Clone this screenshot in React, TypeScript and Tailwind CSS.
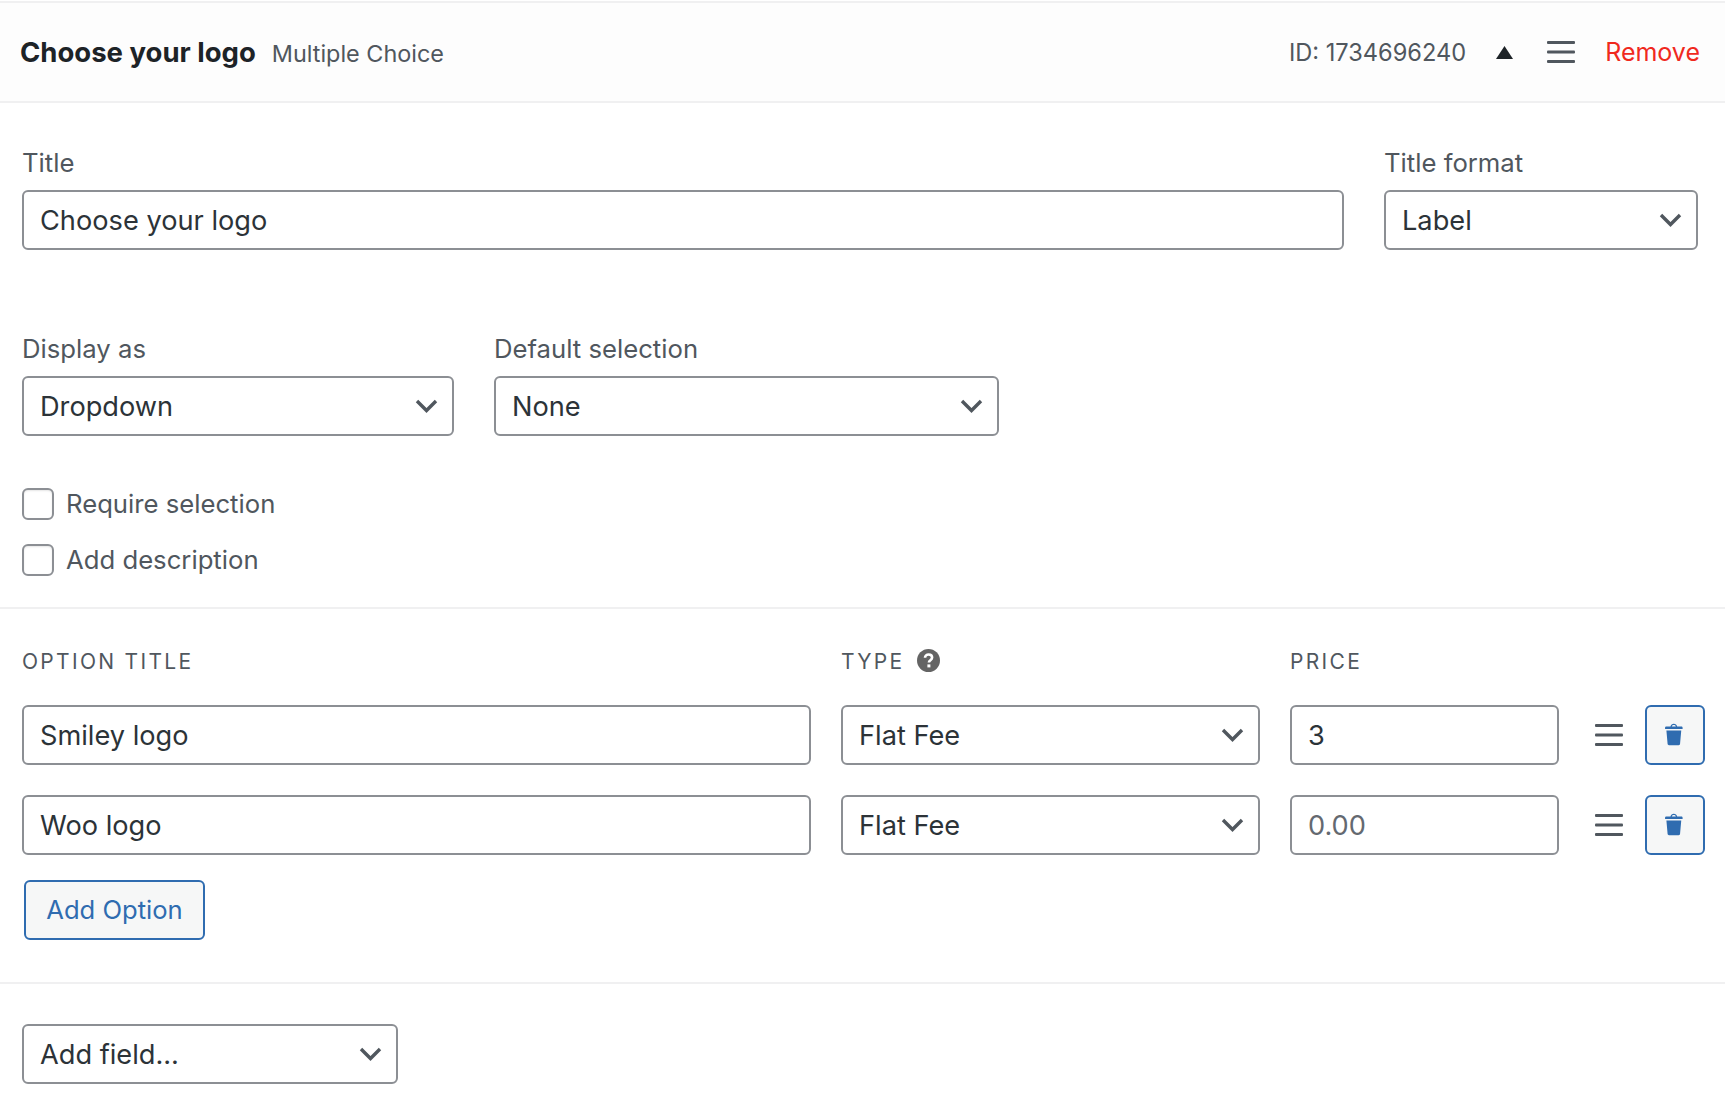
import React from 'react';

const inputClass =
  'w-full h-[60px] rounded-[6px] border-2 border-[#8c8f94] bg-white pl-[16px] pr-[16px] text-[27.2px] text-[#2c3338] placeholder:text-[#646970] outline-none';

const Chevron = () => (
  <svg
    className="absolute right-[16px] top-1/2 -translate-y-1/2 pointer-events-none"
    width="23"
    height="14"
    viewBox="0 0 23 14"
    fill="none"
    stroke="#50575e"
    strokeWidth="3.4"
  >
    <path d="M2 2l9.5 9.5L21 2" />
  </svg>
);

const Select: React.FC<{ value: string; className: string }> = ({ value, className }) => (
  <div className={`relative ${className}`}>
    <select
      defaultValue={value}
      className="w-full h-[60px] appearance-none rounded-[6px] border-2 border-[#8c8f94] bg-white pl-[16px] pr-[40px] pt-[2px] text-[27.2px] text-[#2c3338] outline-none"
    >
      <option>{value}</option>
    </select>
    <Chevron />
  </div>
);

const MenuIcon: React.FC<{ width: number; height: number }> = ({ width, height }) => (
  <svg width={width} height={height} viewBox={`0 0 ${width} ${height}`} fill="#50575e">
    <rect x="0" y="0" width={width} height="3" rx="1" />
    <rect x="0" y={(height - 3) / 2} width={width} height="3" rx="1" />
    <rect x="0" y={height - 3} width={width} height="3" rx="1" />
  </svg>
);

const TrashIcon = () => (
  <svg width="27" height="27" viewBox="0 0 20 20" fill="#2f6cb0">
    <path d="M12 4h3c.6 0 1 .4 1 1v1H3V5c0-.6.5-1 1-1h3c.2-1.1 1.3-2 2.5-2s2.3.9 2.5 2zM8 4h3c-.2-.6-.9-1-1.5-1S8.2 3.4 8 4zM4 7h11l-.9 10.1c0 .5-.5.9-1 .9H5.9c-.5 0-.9-.4-1-.9L4 7z" />
  </svg>
);

const HelpIcon = () => (
  <svg className="mb-[4px]" width="23" height="23" viewBox="0 0 23 23">
    <circle cx="11.5" cy="11.5" r="11.5" fill="#646464" />
    <path d="M8 8.8c0-2 1.6-3.3 3.6-3.3s3.5 1.2 3.5 3c0 2.7-3.2 2.6-3.2 5" fill="none" stroke="#fff" strokeWidth="2.6" />
    <rect x="10.4" y="15.4" width="3" height="3" fill="#fff" />
  </svg>
);

const Checkbox: React.FC<{ label: string }> = ({ label }) => (
  <label className="flex items-center gap-[12px] h-[32px] text-[25.7px] text-[#50575e]">
    <input
      type="checkbox"
      className="appearance-none w-[32px] h-[32px] rounded-[6px] border-2 border-[#8c8f94] bg-white shadow-[inset_0_1px_2px_rgba(0,0,0,0.1)]"
    />
    <span className="pt-px">{label}</span>
  </label>
);

const OptionRow: React.FC<{ title: string; price?: string }> = ({ title, price }) => (
  <div className="flex items-center">
    <div className="w-[789px]">
      <input className={inputClass} defaultValue={title} />
    </div>
    <Select value="Flat Fee" className="ml-[30px] w-[419px]" />
    <div className="ml-[30px] w-[269px]">
      <input className={inputClass} defaultValue={price} placeholder="0.00" />
    </div>
    <div className="ml-[36px]">
      <MenuIcon width={28} height={22} />
    </div>
    <button className="ml-[22px] flex h-[60px] w-[60px] items-center justify-center rounded-[6px] border-2 border-[#2f6cb0] bg-[#f6f7f7] pb-[2px] pr-[2px]">
      <TrashIcon />
    </button>
  </div>
);

export default function App() {
  return (
    <div className="min-h-[1116px] bg-white pt-px text-[#50575e] [font-family:Inter,sans-serif]">
      {/* Header */}
      <div className="flex h-[102px] items-center justify-between border-y-2 border-[#f0f0f1] bg-[#fdfdfd] pl-[20px] pr-[25px] pt-px">
        <div className="flex items-baseline">
          <span className="text-[27.5px] font-bold text-[#1d2327]">Choose your logo</span>
          <span className="ml-[16px] text-[23.4px] text-[#50575e]">Multiple Choice</span>
        </div>
        <div className="flex items-center">
          <span className="text-[23.6px] text-[#50575e]">ID: 1734696240</span>
          <svg className="ml-[30px]" width="17" height="13" viewBox="0 0 17 13" fill="#1d2327">
            <path d="M8.5 0L17 13H0z" />
          </svg>
          <div className="ml-[34px] mb-px">
            <MenuIcon width={28} height={22} />
          </div>
          <span className="ml-[30px] text-[25px] text-[#f0291e]">Remove</span>
        </div>
      </div>

      {/* Title fields */}
      <div className="px-[22px] pt-[43px]">
        <div className="flex gap-[40px]">
          <div className="w-[1322px]">
            <div className="mb-[10px] h-[34px] text-[25.7px] leading-[34px]">Title</div>
            <input className={inputClass} defaultValue="Choose your logo" />
          </div>
          <div className="w-[314px]">
            <div className="mb-[10px] h-[34px] text-[25.7px] leading-[34px]">Title format</div>
            <Select value="Label" className="w-full" />
          </div>
        </div>

        <div className="mt-[82px] flex gap-[40px]">
          <div className="w-[432px]">
            <div className="mb-[10px] h-[34px] text-[25.7px] leading-[34px]">Display as</div>
            <Select value="Dropdown" className="w-full" />
          </div>
          <div className="w-[505px]">
            <div className="mb-[10px] h-[34px] text-[25.7px] leading-[34px]">Default selection</div>
            <Select value="None" className="w-full" />
          </div>
        </div>

        <div className="mt-[52px] flex flex-col gap-[24px]">
          <Checkbox label="Require selection" />
          <Checkbox label="Add description" />
        </div>
      </div>

      {/* Options */}
      <div className="mt-[31px] border-t-2 border-[#f0f0f1] pl-[22px] pr-[20px] pt-[40px]">
        <div className="flex h-[26px] items-center text-[21px] uppercase tracking-[0.11em]">
          <div className="w-[819px]">Option title</div>
          <div className="flex w-[449px] items-center gap-[12px]">
            Type
            <HelpIcon />
          </div>
          <div>Price</div>
        </div>
        <div className="mt-[30px] flex flex-col gap-[30px]">
          <OptionRow title="Smiley logo" price="3" />
          <OptionRow title="Woo logo" />
        </div>
        <button className="ml-[2px] mt-[25px] h-[60px] w-[181px] rounded-[6px] border-2 border-[#2f6cb0] bg-[#f6f7f7] text-[25.6px] text-[#2f6cb0]">
          Add Option
        </button>
      </div>

      {/* Add field */}
      <div className="mt-[42px] border-t-2 border-[#f0f0f1] px-[22px] pt-[40px]">
        <Select value="Add field..." className="w-[376px]" />
      </div>
    </div>
  );
}
